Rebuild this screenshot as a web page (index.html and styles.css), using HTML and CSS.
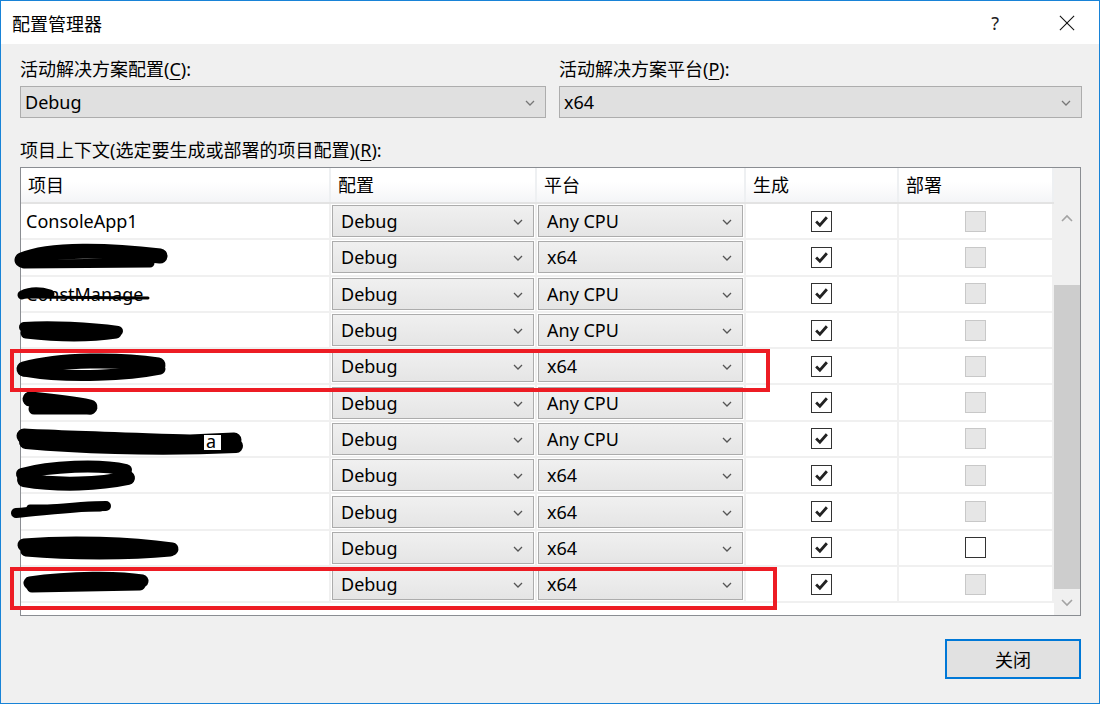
FILE: index.html
```html
<!DOCTYPE html>
<html lang="zh-CN">
<head>
    <meta charset="UTF-8">
    <title>配置管理器</title>
    <link rel="stylesheet" href="styles.css">
</head>
<body>
<div class="dialog">
    <div class="titlebar">
        <span class="title">配置管理器</span>
        <span class="help">?</span>
        <svg class="close-x" width="18" height="18" viewBox="0 0 18 18"><path d="M1 1 L17 17 M17 1 L1 17" stroke="#111" stroke-width="1.2" fill="none"/></svg>
    </div>

    <div class="content">
        <div class="solution-row">
            <div class="field">
                <div class="label">活动解决方案配置(<u>C</u>):</div>
                <div class="combo big">Debug<svg class="chev" viewBox="0 0 10 6"><path d="M1 1 L5 5 L9 1" /></svg></div>
            </div>
            <div class="field">
                <div class="label">活动解决方案平台(<u>P</u>):</div>
                <div class="combo big">x64<svg class="chev" viewBox="0 0 10 6"><path d="M1 1 L5 5 L9 1" /></svg></div>
            </div>
        </div>

        <div class="label context">项目上下文(选定要生成或部署的项目配置)(<u>R</u>):</div>

        <div class="grid-box">
            <div class="grid">
                <div class="head">
                    <div class="hc">项目</div>
                    <div class="hc">配置</div>
                    <div class="hc">平台</div>
                    <div class="hc">生成</div>
                    <div class="hc">部署</div>
                </div>

                <div class="row">
                    <div class="cell name">ConsoleApp1</div>
                    <div class="cell"><div class="combo">Debug<svg class="chev" viewBox="0 0 10 6"><path d="M1 1 L5 5 L9 1" /></svg></div></div>
                    <div class="cell"><div class="combo">Any CPU<svg class="chev" viewBox="0 0 10 6"><path d="M1 1 L5 5 L9 1" /></svg></div></div>
                    <div class="cell center"><span class="check on"><svg viewBox="0 0 14 14"><path d="M2 7 L5.5 10.5 L12 3"/></svg></span></div>
                    <div class="cell center"><span class="check off"></span></div>
                </div>

                <div class="row">
                    <div class="cell name">Con<svg class="scrib" viewBox="0 0 260 36"><path d="M12 20 C40 8 100 10 150 16" stroke-width="15"/><path d="M14 24 L140 23" stroke-width="9"/></svg></div>
                    <div class="cell"><div class="combo">Debug<svg class="chev" viewBox="0 0 10 6"><path d="M1 1 L5 5 L9 1" /></svg></div></div>
                    <div class="cell"><div class="combo">x64<svg class="chev" viewBox="0 0 10 6"><path d="M1 1 L5 5 L9 1" /></svg></div></div>
                    <div class="cell center"><span class="check on"><svg viewBox="0 0 14 14"><path d="M2 7 L5.5 10.5 L12 3"/></svg></span></div>
                    <div class="cell center"><span class="check off"></span></div>
                </div>

                <div class="row">
                    <div class="cell name">ConstManage<svg class="scrib" viewBox="0 0 260 36"><path d="M12 18 C20 14 30 14 40 17" stroke-width="9"/><path d="M16 20 L138 21" stroke-width="3"/></svg></div>
                    <div class="cell"><div class="combo">Debug<svg class="chev" viewBox="0 0 10 6"><path d="M1 1 L5 5 L9 1" /></svg></div></div>
                    <div class="cell"><div class="combo">Any CPU<svg class="chev" viewBox="0 0 10 6"><path d="M1 1 L5 5 L9 1" /></svg></div></div>
                    <div class="cell center"><span class="check on"><svg viewBox="0 0 14 14"><path d="M2 7 L5.5 10.5 L12 3"/></svg></span></div>
                    <div class="cell center"><span class="check off"></span></div>
                </div>

                <div class="row">
                    <div class="cell name"><svg class="scrib" viewBox="0 0 260 36"><path d="M14 14 C40 12 80 14 108 18" stroke-width="10"/><path d="M16 20 C50 24 80 24 106 20" stroke-width="11"/></svg></div>
                    <div class="cell"><div class="combo">Debug<svg class="chev" viewBox="0 0 10 6"><path d="M1 1 L5 5 L9 1" /></svg></div></div>
                    <div class="cell"><div class="combo">Any CPU<svg class="chev" viewBox="0 0 10 6"><path d="M1 1 L5 5 L9 1" /></svg></div></div>
                    <div class="cell center"><span class="check on"><svg viewBox="0 0 14 14"><path d="M2 7 L5.5 10.5 L12 3"/></svg></span></div>
                    <div class="cell center"><span class="check off"></span></div>
                </div>

                <div class="row">
                    <div class="cell name"><svg class="scrib" viewBox="0 0 260 36"><path d="M14 20 C50 10 110 10 148 16" stroke-width="15"/><path d="M14 22 C60 30 120 26 150 20" stroke-width="11"/></svg></div>
                    <div class="cell"><div class="combo">Debug<svg class="chev" viewBox="0 0 10 6"><path d="M1 1 L5 5 L9 1" /></svg></div></div>
                    <div class="cell"><div class="combo">x64<svg class="chev" viewBox="0 0 10 6"><path d="M1 1 L5 5 L9 1" /></svg></div></div>
                    <div class="cell center"><span class="check on"><svg viewBox="0 0 14 14"><path d="M2 7 L5.5 10.5 L12 3"/></svg></span></div>
                    <div class="cell center"><span class="check off"></span></div>
                </div>

                <div class="row">
                    <div class="cell name"><svg class="scrib" viewBox="0 0 260 36"><path d="M20 14 C40 16 60 18 80 22" stroke-width="15"/><path d="M24 24 L80 24" stroke-width="11"/></svg></div>
                    <div class="cell"><div class="combo">Debug<svg class="chev" viewBox="0 0 10 6"><path d="M1 1 L5 5 L9 1" /></svg></div></div>
                    <div class="cell"><div class="combo">Any CPU<svg class="chev" viewBox="0 0 10 6"><path d="M1 1 L5 5 L9 1" /></svg></div></div>
                    <div class="cell center"><span class="check on"><svg viewBox="0 0 14 14"><path d="M2 7 L5.5 10.5 L12 3"/></svg></span></div>
                    <div class="cell center"><span class="check off"></span></div>
                </div>

                <div class="row">
                    <div class="cell name"><svg class="scrib" viewBox="0 0 260 36"><path d="M14 14 C50 16 120 18 180 20 L224 18" stroke-width="15"/><path d="M16 20 C60 24 140 28 226 24" stroke-width="14"/><rect x="194" y="13" width="17" height="15" fill="#fff"/><text x="196" y="26" class="peek">a</text><text x="220" y="27" class="peek">y</text></svg></div>
                    <div class="cell"><div class="combo">Debug<svg class="chev" viewBox="0 0 10 6"><path d="M1 1 L5 5 L9 1" /></svg></div></div>
                    <div class="cell"><div class="combo">Any CPU<svg class="chev" viewBox="0 0 10 6"><path d="M1 1 L5 5 L9 1" /></svg></div></div>
                    <div class="cell center"><span class="check on"><svg viewBox="0 0 14 14"><path d="M2 7 L5.5 10.5 L12 3"/></svg></span></div>
                    <div class="cell center"><span class="check off"></span></div>
                </div>

                <div class="row">
                    <div class="cell name"><svg class="scrib" viewBox="0 0 260 36"><path d="M12 16 C40 8 90 6 116 12" stroke-width="12"/><path d="M14 22 C50 28 90 26 118 20" stroke-width="14"/></svg></div>
                    <div class="cell"><div class="combo">Debug<svg class="chev" viewBox="0 0 10 6"><path d="M1 1 L5 5 L9 1" /></svg></div></div>
                    <div class="cell"><div class="combo">x64<svg class="chev" viewBox="0 0 10 6"><path d="M1 1 L5 5 L9 1" /></svg></div></div>
                    <div class="cell center"><span class="check on"><svg viewBox="0 0 14 14"><path d="M2 7 L5.5 10.5 L12 3"/></svg></span></div>
                    <div class="cell center"><span class="check off"></span></div>
                </div>

                <div class="row">
                    <div class="cell name"><svg class="scrib" viewBox="0 0 260 36"><path d="M6 19 C40 16 70 12 96 12" stroke-width="10"/><path d="M20 14 L90 14" stroke-width="7"/></svg></div>
                    <div class="cell"><div class="combo">Debug<svg class="chev" viewBox="0 0 10 6"><path d="M1 1 L5 5 L9 1" /></svg></div></div>
                    <div class="cell"><div class="combo">x64<svg class="chev" viewBox="0 0 10 6"><path d="M1 1 L5 5 L9 1" /></svg></div></div>
                    <div class="cell center"><span class="check on"><svg viewBox="0 0 14 14"><path d="M2 7 L5.5 10.5 L12 3"/></svg></span></div>
                    <div class="cell center"><span class="check off"></span></div>
                </div>

                <div class="row">
                    <div class="cell name"><svg class="scrib" viewBox="0 0 260 36"><path d="M14 14 C60 10 120 12 162 18" stroke-width="13"/><path d="M16 20 C60 24 120 24 160 20" stroke-width="11"/></svg></div>
                    <div class="cell"><div class="combo">Debug<svg class="chev" viewBox="0 0 10 6"><path d="M1 1 L5 5 L9 1" /></svg></div></div>
                    <div class="cell"><div class="combo">x64<svg class="chev" viewBox="0 0 10 6"><path d="M1 1 L5 5 L9 1" /></svg></div></div>
                    <div class="cell center"><span class="check on"><svg viewBox="0 0 14 14"><path d="M2 7 L5.5 10.5 L12 3"/></svg></span></div>
                    <div class="cell center"><span class="check empty"></span></div>
                </div>

                <div class="row">
                    <div class="cell name"><svg class="scrib" viewBox="0 0 260 36"><path d="M20 16 C60 10 110 10 132 14" stroke-width="13"/><path d="M22 20 L130 18" stroke-width="11"/></svg></div>
                    <div class="cell"><div class="combo">Debug<svg class="chev" viewBox="0 0 10 6"><path d="M1 1 L5 5 L9 1" /></svg></div></div>
                    <div class="cell"><div class="combo">x64<svg class="chev" viewBox="0 0 10 6"><path d="M1 1 L5 5 L9 1" /></svg></div></div>
                    <div class="cell center"><span class="check on"><svg viewBox="0 0 14 14"><path d="M2 7 L5.5 10.5 L12 3"/></svg></span></div>
                    <div class="cell center"><span class="check off"></span></div>
                </div>
            </div>

            <div class="vscroll">
                <svg class="arrow" viewBox="0 0 12 8"><path d="M1 7 L6 2 L11 7"/></svg>
                <div class="track"><div class="thumb"></div></div>
                <svg class="arrow" viewBox="0 0 12 8"><path d="M1 1 L6 6 L11 1"/></svg>
            </div>
        </div>

        <div class="footer">
            <button class="btn">关闭</button>
        </div>
    </div>

    <!-- markup boxes drawn over the screenshot -->
    <div class="mark mark-1"></div>
    <div class="mark mark-2"></div>
</div>
</body>
</html>
```

FILE: styles.css
```css
* {
    box-sizing: border-box;
}

body {
    margin: 0;
    background: #f0f0f0;
    font-family: "Noto Sans", "Noto Sans CJK SC", sans-serif;
    font-size: 18px;
    color: #000;
}

.dialog {
    position: relative;
    width: 1100px;
    height: 704px;
    border: 1px solid #1883d7;
    display: flex;
    flex-direction: column;
    background: #f0f0f0;
}

.titlebar {
    height: 43px;
    background: #fff;
    display: flex;
    align-items: center;
    padding-left: 11px;
    padding-right: 24px;
}

.title {
    flex: 1;
}

.help {
    color: #222;
    margin-right: 60px;
}

.close-x {
    width: 16px;
    height: 16px;
}

.content {
    flex: 1;
    padding: 13px 18px 0 19px;
    display: flex;
    flex-direction: column;
}

.solution-row {
    display: grid;
    grid-template-columns: 526px 523px;
    column-gap: 13px;
}

.label {
    height: 24px;
    line-height: 24px;
    white-space: nowrap;
}

.label u {
    text-decoration-thickness: 1px;
    text-underline-offset: 3px;
}

.combo {
    position: relative;
    display: flex;
    align-items: center;
    height: 31px;
    padding-left: 8px;
    border: 1px solid #acacac;
    background: linear-gradient(#f0f0f0, #e5e5e5);
    white-space: nowrap;
}

.combo.big {
    margin-top: 5px;
    height: 32px;
    background: #e0e0e0;
    border-color: #adadad;
    padding-left: 4px;
}

.chev {
    position: absolute;
    right: 10px;
    top: 13px;
    width: 10px;
    height: 6px;
    fill: none;
    stroke: #555;
    stroke-width: 1.3;
}

.combo.big .chev {
    right: 10px;
    stroke: #777;
}

.context {
    margin-top: 20px;
}

.grid-box {
    margin-top: 5px;
    height: 449px;
    border: 1px solid #8a8d92;
    background: #fff;
    display: flex;
}

.grid {
    flex: 1;
    display: flex;
    flex-direction: column;
}

.head,
.row {
    display: grid;
    grid-template-columns: 310px 206px 209px 153px 155px;
}

.head {
    height: 36px;
    border-bottom: 2px solid #e3e3e3;
    background: linear-gradient(#fff 40%, #f4f5f7);
}

.hc {
    padding-left: 7px;
    line-height: 34px;
    border-right: 2px solid #eef0f2;
}

.row {
    height: 36.3px;
}

.cell {
    position: relative;
    border-right: 2px solid #f0f0f0;
    border-bottom: 2px solid #f0f0f0;
    padding: 1px;
    display: flex;
    align-items: center;
}

.cell .combo {
    flex: 1;
    height: 32px;
}

.cell.name {
    padding-left: 5px;
}

.cell.center {
    justify-content: center;
}

.scrib {
    position: absolute;
    left: -11px;
    top: 0;
    width: 260px;
    height: 36px;
    overflow: visible;
}

.scrib path {
    fill: none;
    stroke: #000;
    stroke-linecap: round;
}

.peek {
    font-size: 18px;
    fill: #000;
    font-family: "Noto Sans", sans-serif;
}

.check {
    width: 21px;
    height: 21px;
    border: 1px solid #333;
    background: #fff;
    display: flex;
    align-items: center;
    justify-content: center;
}

.check svg {
    width: 15px;
    height: 15px;
    fill: none;
    stroke: #222;
    stroke-width: 2.6;
}

.check.off {
    border-color: #c8c8c8;
    background: #e6e6e6;
}

.vscroll {
    width: 27px;
    background: #f0f0f0;
    display: flex;
    flex-direction: column;
    align-items: center;
    padding-top: 46px;
}

.arrow {
    width: 12px;
    height: 8px;
    fill: none;
    stroke: #a3a3a3;
    stroke-width: 1.6;
    flex-shrink: 0;
}

.track {
    flex: 1;
    width: 100%;
    padding-top: 63px;
    padding-bottom: 10px;
    display: flex;
    flex-direction: column;
}

.thumb {
    flex: 1;
    background: #cdcdcd;
}

.vscroll .arrow:last-child {
    margin-bottom: 8px;
}

.footer {
    display: flex;
    justify-content: flex-end;
    margin-top: 23px;
}

.btn {
    width: 136px;
    height: 40px;
    border: 2px solid #0078d7;
    background: #e1e1e1;
    font: inherit;
    color: #000;
}

.mark {
    position: absolute;
    border: 4px solid #ed1c24;
}

.mark-1 {
    left: 9px;
    top: 348px;
    width: 760px;
    height: 43px;
}

.mark-2 {
    left: 9px;
    top: 566px;
    width: 767px;
    height: 43px;
}
```
